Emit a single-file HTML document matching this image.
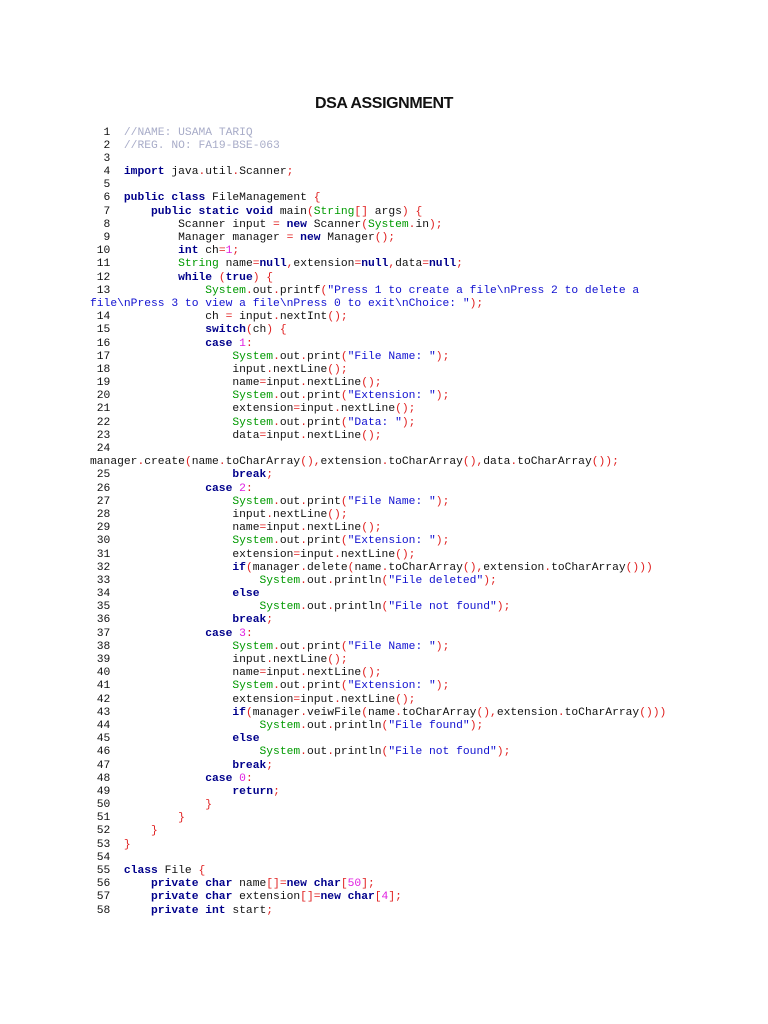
<!DOCTYPE html>
<html><head><meta charset="utf-8">
<style>
html,body{margin:0;padding:0;background:#fff;width:768px;height:1024px;overflow:hidden}
h1{position:absolute;left:0;width:768px;top:95px;margin:0;text-align:center;font:bold 16px "Liberation Sans",sans-serif;letter-spacing:-0.4px;color:#111}
pre{position:absolute;left:90px;top:126.5px;margin:0;font:11.3px/13.19px "Liberation Mono",monospace;color:#111}
k{color:#00008b;font-weight:bold}
g{color:#009a00}
z{color:#1010d0}
r{color:#e02020}
m{color:#e020e0}
c{color:#a8acc8}
</style></head><body>
<h1>DSA ASSIGNMENT</h1>
<pre>  1  <c>//NAME: USAMA TARIQ</c>
  2  <c>//REG. NO: FA19-BSE-063</c>
  3
  4  <k>import</k> java<r>.</r>util<r>.</r>Scanner<r>;</r>
  5
  6  <k>public class</k> FileManagement <r>{</r>
  7      <k>public static void</k> main<r>(</r><g>String</g><r>[]</r> args<r>)</r> <r>{</r>
  8          Scanner input <r>=</r> <k>new</k> Scanner<r>(</r><g>System</g><r>.</r>in<r>);</r>
  9          Manager manager <r>=</r> <k>new</k> Manager<r>();</r>
 10          <k>int</k> ch<r>=</r><m>1</m><r>;</r>
 11          <g>String</g> name<r>=</r><k>null</k><r>,</r>extension<r>=</r><k>null</k><r>,</r>data<r>=</r><k>null</k><r>;</r>
 12          <k>while</k> <r>(</r><k>true</k><r>)</r> <r>{</r>
 13              <g>System</g><r>.</r>out<r>.</r>printf<r>(</r><z>"Press 1 to create a file\nPress 2 to delete a</z>
<z>file\nPress 3 to view a file\nPress 0 to exit\nChoice: "</z><r>);</r>
 14              ch <r>=</r> input<r>.</r>nextInt<r>();</r>
 15              <k>switch</k><r>(</r>ch<r>)</r> <r>{</r>
 16              <k>case</k> <m>1</m><r>:</r>
 17                  <g>System</g><r>.</r>out<r>.</r>print<r>(</r><z>"File Name: "</z><r>);</r>
 18                  input<r>.</r>nextLine<r>();</r>
 19                  name<r>=</r>input<r>.</r>nextLine<r>();</r>
 20                  <g>System</g><r>.</r>out<r>.</r>print<r>(</r><z>"Extension: "</z><r>);</r>
 21                  extension<r>=</r>input<r>.</r>nextLine<r>();</r>
 22                  <g>System</g><r>.</r>out<r>.</r>print<r>(</r><z>"Data: "</z><r>);</r>
 23                  data<r>=</r>input<r>.</r>nextLine<r>();</r>
 24
manager<r>.</r>create<r>(</r>name<r>.</r>toCharArray<r>(),</r>extension<r>.</r>toCharArray<r>(),</r>data<r>.</r>toCharArray<r>());</r>
 25                  <k>break</k><r>;</r>
 26              <k>case</k> <m>2</m><r>:</r>
 27                  <g>System</g><r>.</r>out<r>.</r>print<r>(</r><z>"File Name: "</z><r>);</r>
 28                  input<r>.</r>nextLine<r>();</r>
 29                  name<r>=</r>input<r>.</r>nextLine<r>();</r>
 30                  <g>System</g><r>.</r>out<r>.</r>print<r>(</r><z>"Extension: "</z><r>);</r>
 31                  extension<r>=</r>input<r>.</r>nextLine<r>();</r>
 32                  <k>if</k><r>(</r>manager<r>.</r>delete<r>(</r>name<r>.</r>toCharArray<r>(),</r>extension<r>.</r>toCharArray<r>()))</r>
 33                      <g>System</g><r>.</r>out<r>.</r>println<r>(</r><z>"File deleted"</z><r>);</r>
 34                  <k>else</k>
 35                      <g>System</g><r>.</r>out<r>.</r>println<r>(</r><z>"File not found"</z><r>);</r>
 36                  <k>break</k><r>;</r>
 37              <k>case</k> <m>3</m><r>:</r>
 38                  <g>System</g><r>.</r>out<r>.</r>print<r>(</r><z>"File Name: "</z><r>);</r>
 39                  input<r>.</r>nextLine<r>();</r>
 40                  name<r>=</r>input<r>.</r>nextLine<r>();</r>
 41                  <g>System</g><r>.</r>out<r>.</r>print<r>(</r><z>"Extension: "</z><r>);</r>
 42                  extension<r>=</r>input<r>.</r>nextLine<r>();</r>
 43                  <k>if</k><r>(</r>manager<r>.</r>veiwFile<r>(</r>name<r>.</r>toCharArray<r>(),</r>extension<r>.</r>toCharArray<r>()))</r>
 44                      <g>System</g><r>.</r>out<r>.</r>println<r>(</r><z>"File found"</z><r>);</r>
 45                  <k>else</k>
 46                      <g>System</g><r>.</r>out<r>.</r>println<r>(</r><z>"File not found"</z><r>);</r>
 47                  <k>break</k><r>;</r>
 48              <k>case</k> <m>0</m><r>:</r>
 49                  <k>return</k><r>;</r>
 50              <r>}</r>
 51          <r>}</r>
 52      <r>}</r>
 53  <r>}</r>
 54
 55  <k>class</k> File <r>{</r>
 56      <k>private char</k> name<r>[]=</r><k>new char</k><r>[</r><m>50</m><r>];</r>
 57      <k>private char</k> extension<r>[]=</r><k>new char</k><r>[</r><m>4</m><r>];</r>
 58      <k>private int</k> start<r>;</r></pre>
</body></html>
